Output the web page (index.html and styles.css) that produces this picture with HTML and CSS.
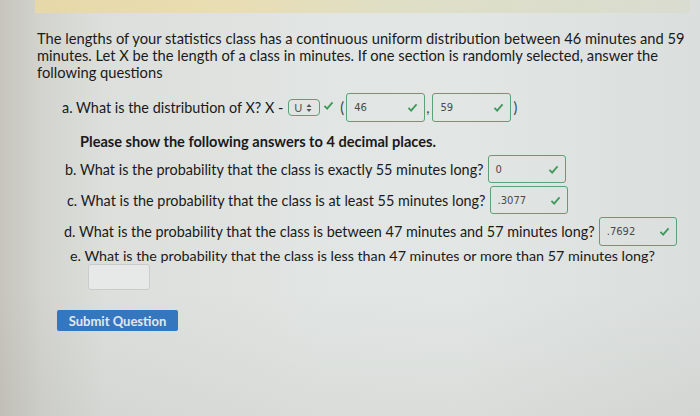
FILE: index.html
```html
<!DOCTYPE html>
<html>
<head>
<meta charset="utf-8">
<link rel="stylesheet" href="styles.css">
</head>
<body>
<div class="band"></div>
<div class="content">
  <p class="intro">The lengths of your statistics class has a continuous uniform distribution between 46 minutes and 59 minutes. Let X be the length of a class in minutes. If one section is randomly selected, answer the following questions</p>

  <div class="row row-a">
    <span>a. What is the distribution of X? X -</span>
    <span class="select">U
      <svg class="arrows" viewBox="0 0 6 10" width="6" height="10"><path d="M0.5 4 L3 1 L5.5 4 Z M0.5 6 L3 9 L5.5 6 Z" fill="#555"/></svg>
    </span>
    <svg class="check sup" viewBox="0 0 12 10" width="11" height="9"><path d="M1.5 5.5 L4.5 8.5 L10.5 1.5" fill="none" stroke="#3f9a5c" stroke-width="2"/></svg>
    <span class="paren">(</span>
    <span class="box box-a"><span class="val">46</span><svg class="check" viewBox="0 0 12 10" width="11" height="9"><path d="M1.5 5.5 L4.5 8.5 L10.5 1.5" fill="none" stroke="#3f9a5c" stroke-width="2"/></svg></span>
    <span class="comma">,</span>
    <span class="box box-a"><span class="val">59</span><svg class="check" viewBox="0 0 12 10" width="11" height="9"><path d="M1.5 5.5 L4.5 8.5 L10.5 1.5" fill="none" stroke="#3f9a5c" stroke-width="2"/></svg></span>
    <span class="paren-close">)</span>
  </div>

  <p class="note">Please show the following answers to 4 decimal places.</p>

  <div class="row row-b">
    <span>b. What is the probability that the class is exactly 55 minutes long?</span>
    <span class="box box-q"><span class="val">0</span><svg class="check" viewBox="0 0 12 10" width="11" height="9"><path d="M1.5 5.5 L4.5 8.5 L10.5 1.5" fill="none" stroke="#3f9a5c" stroke-width="2"/></svg></span>
  </div>

  <div class="row row-c">
    <span>c. What is the probability that the class is at least 55 minutes long?</span>
    <span class="box box-q"><span class="val">.3077</span><svg class="check" viewBox="0 0 12 10" width="11" height="9"><path d="M1.5 5.5 L4.5 8.5 L10.5 1.5" fill="none" stroke="#3f9a5c" stroke-width="2"/></svg></span>
  </div>

  <div class="row row-d">
    <span>d. What is the probability that the class is between 47 minutes and 57 minutes long?</span>
    <span class="box box-q"><span class="val">.7692</span><svg class="check" viewBox="0 0 12 10" width="11" height="9"><path d="M1.5 5.5 L4.5 8.5 L10.5 1.5" fill="none" stroke="#3f9a5c" stroke-width="2"/></svg></span>
  </div>

  <p class="question-e">e. What is the probability that the class is less than 47 minutes or more than 57 minutes long?</p>
  <div class="empty-box"></div>

  <button class="submit">Submit Question</button>
</div>
</body>
</html>
```

FILE: styles.css
```css
html, body {
  margin: 0;
  padding: 0;
}
body {
  width: 700px;
  height: 416px;
  overflow: hidden;
  font-family: "Lato", "Open Sans", sans-serif;
  color: #1a1a1a;
  background:
    linear-gradient(to bottom, rgba(255,255,255,0) 0%, rgba(255,255,255,0) 70%, rgba(120,120,110,0.08) 100%),
    linear-gradient(to right, #c6c4bd 0%, #d3d4cf 6%, #dcdfdb 15%, #e1e5e3 45%, #e2e6e4 65%, #dadedc 100%);
}
.band {
  margin-left: 35px;
  width: 655px;
  height: 13px;
  background: linear-gradient(to right, #e6d8a8 0%, #e9ddb3 30%, #dfdfc6 55%, #d9dcd0 100%);
}
.content {
  padding-left: 37px;
}
.intro {
  margin: 17px 0 0 0;
  width: 656px;
  font-size: 14.7px;
  line-height: 17px;
}
.row {
  display: flex;
  align-items: center;
  font-size: 14.4px;
  line-height: 17px;
}
.row-a {
  margin-top: 12px;
  margin-left: 25px;
  height: 29px;
}
.select {
  display: inline-flex;
  align-items: center;
  gap: 4px;
  margin-left: 5px;
  height: 15px;
  width: 22px;
  padding: 0 3px 0 5px;
  border: 1.5px solid #5aa276;
  border-radius: 4px;
  font-size: 11px;
  color: #555;
}
.check.sup {
  align-self: flex-start;
  margin: 8px 0 0 3px;
}
.paren {
  margin-left: 6px;
  color: #444;
}
.paren-close {
  margin-left: 2px;
  color: #444;
}
.comma {
  color: #444;
  margin: 0 1px;
}
.box {
  display: flex;
  align-items: center;
  justify-content: space-between;
  box-sizing: border-box;
  border: 1.5px solid #5aa276;
  border-radius: 3px;
  padding: 0 6px 0 7px;
  font-family: "DejaVu Sans", sans-serif;
  font-size: 10px;
  color: #4a4a4a;
}
.box-a {
  width: 79px;
  height: 29px;
  margin-left: 2px;
}
.note {
  margin: 11px 0 0 43px;
  font-size: 14.6px;
  line-height: 17px;
  font-weight: 700;
}
.row-b {
  margin-top: 5px;
  margin-left: 28px;
  height: 28px;
}
.row-c {
  margin-top: 3px;
  margin-left: 30px;
  height: 28px;
}
.row-d {
  margin-top: 3px;
  margin-left: 27px;
  height: 29px;
}
.box-q {
  width: 78px;
  height: 100%;
  margin-left: 4px;
}
.question-e {
  margin: 1px 0 0 33px;
  font-size: 14.3px;
  line-height: 17px;
}
.empty-box {
  margin-left: 51px;
  width: 62px;
  height: 26px;
  box-sizing: border-box;
  border: 1px solid #c9cccb;
  border-radius: 3px;
  background: #e6e9e8;
}
.submit {
  display: block;
  margin: 20px 0 0 20px;
  width: 121px;
  height: 21px;
  padding: 0;
  border: none;
  border-radius: 2px;
  background: #3477bf;
  color: #e1e8ef;
  font-family: "Lato", "Open Sans", sans-serif;
  font-size: 13px;
  font-weight: 700;
}
```
